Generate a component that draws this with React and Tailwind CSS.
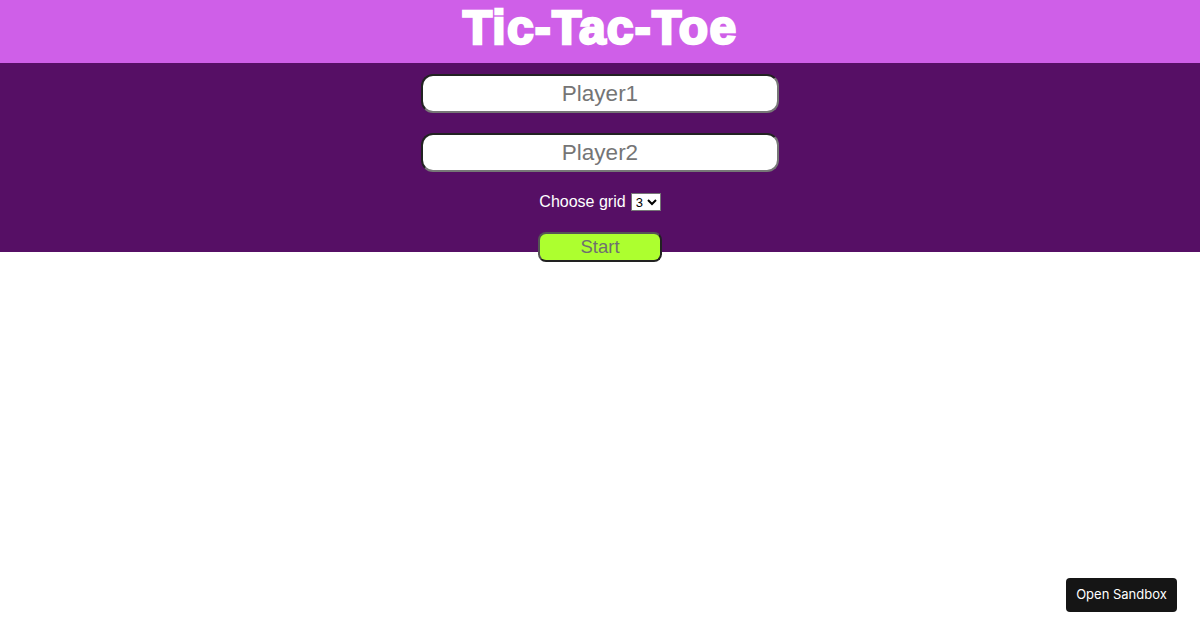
export default function App() {
  return (
    <div className="min-h-[630px] bg-white font-['Liberation_Sans',Arial,sans-serif]">
      <header className="h-[63px] bg-[#cf5fe8] flex items-center justify-center">
        <h1 className="text-[48px] font-bold text-white leading-none tracking-[1.2px] [-webkit-text-stroke:2.5px_white] -mt-[7px]">
          Tic-Tac-Toe
        </h1>
      </header>
      <section className="h-[189px] bg-[#560f65] flex flex-col items-center pt-[11px]">
        <input
          placeholder="Player1"
          className="shrink-0 w-[358px] h-[39px] rounded-[12px] border-2 border-t-[#222] border-l-[#222] border-b-[#777] border-r-[#777] bg-white text-center text-[22.5px] placeholder:text-[#757575] outline-none"
        />
        <input
          placeholder="Player2"
          className="shrink-0 mt-[20px] w-[358px] h-[39px] rounded-[12px] border-2 border-t-[#222] border-l-[#222] border-b-[#777] border-r-[#777] bg-white text-center text-[22.5px] placeholder:text-[#757575] outline-none"
        />
        <div className="shrink-0 mt-[18px] flex items-center gap-[5px] text-white text-[16px]">
          <span>Choose grid</span>
          <select className="h-[18px] bg-white text-black text-[13px] border border-[#767676] leading-none px-0">
            <option>3</option>
            <option>4</option>
            <option>5</option>
          </select>
        </div>
        <button className="mt-[18px] w-[124px] h-[30px] shrink-0 rounded-[8px] bg-[#adff2f] border-2 border-t-[#555] border-l-[#555] border-b-[#222] border-r-[#222] text-[18.5px] text-[#6f6f6f] leading-none">
          Start
        </button>
      </section>
      <button className="fixed right-[23px] bottom-[18px] w-[111px] h-[34px] rounded-[4px] bg-[#151515] text-white text-[13px] font-['Inter',sans-serif]">
        Open Sandbox
      </button>
    </div>
  );
}
